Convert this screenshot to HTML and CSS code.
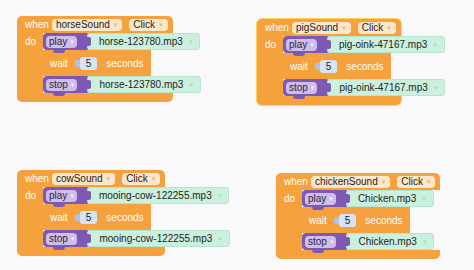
FILE: index.html
```html
<!DOCTYPE html>
<html lang="en">
<head>
    <meta charset="UTF-8">
    <meta name="viewport" content="width=device-width, initial-scale=1.0">
    <title>Animal Sounds - Blocks</title>
    <link rel="stylesheet" href="styles.css">
</head>
<body>
    <div class="workspace">

        <!-- horse -->
        <div class="event horse">
            <div class="head">
                <span class="label">when</span>
                <span class="field">horseSound<i class="arrow">▾</i></span>
                <span class="field second">Click<i class="arrow">▾</i></span>
            </div>
            <div class="mid">
                <div class="arm"><span class="label">do</span></div>
                <div class="stack">
                    <div class="stmt">
                        <div class="sound"><span class="pfield">play<i class="arrow">▾</i></span></div>
                        <div class="asset">horse-123780.mp3<i class="arrow">▾</i></div>
                    </div>
                    <div class="wait">
                        <span class="label">wait</span>
                        <span class="num">5</span>
                        <span class="label secs">seconds</span>
                    </div>
                    <div class="stmt">
                        <div class="sound"><span class="pfield">stop<i class="arrow">▾</i></span></div>
                        <div class="asset">horse-123780.mp3<i class="arrow">▾</i></div>
                    </div>
                </div>
            </div>
            <div class="foot"></div>
        </div>

        <!-- pig (selected) -->
        <div class="event pig selected">
            <div class="head">
                <span class="label">when</span>
                <span class="field">pigSound<i class="arrow">▾</i></span>
                <span class="field second">Click<i class="arrow">▾</i></span>
            </div>
            <div class="mid">
                <div class="arm"><span class="label">do</span></div>
                <div class="stack">
                    <div class="stmt">
                        <div class="sound"><span class="pfield">play<i class="arrow">▾</i></span></div>
                        <div class="asset">pig-oink-47167.mp3<i class="arrow">▾</i></div>
                    </div>
                    <div class="wait">
                        <span class="label">wait</span>
                        <span class="num">5</span>
                        <span class="label secs">seconds</span>
                    </div>
                    <div class="stmt">
                        <div class="sound"><span class="pfield">stop<i class="arrow">▾</i></span></div>
                        <div class="asset">pig-oink-47167.mp3<i class="arrow">▾</i></div>
                    </div>
                </div>
            </div>
            <div class="foot"></div>
        </div>

        <!-- cow -->
        <div class="event cow">
            <div class="head">
                <span class="label">when</span>
                <span class="field">cowSound<i class="arrow">▾</i></span>
                <span class="field second">Click<i class="arrow">▾</i></span>
            </div>
            <div class="mid">
                <div class="arm"><span class="label">do</span></div>
                <div class="stack">
                    <div class="stmt">
                        <div class="sound"><span class="pfield">play<i class="arrow">▾</i></span></div>
                        <div class="asset">mooing-cow-122255.mp3<i class="arrow">▾</i></div>
                    </div>
                    <div class="wait">
                        <span class="label">wait</span>
                        <span class="num">5</span>
                        <span class="label secs">seconds</span>
                    </div>
                    <div class="stmt">
                        <div class="sound"><span class="pfield">stop<i class="arrow">▾</i></span></div>
                        <div class="asset">mooing-cow-122255.mp3<i class="arrow">▾</i></div>
                    </div>
                </div>
            </div>
            <div class="foot"></div>
        </div>

        <!-- chicken -->
        <div class="event chicken">
            <div class="head">
                <span class="label">when</span>
                <span class="field">chickenSound<i class="arrow">▾</i></span>
                <span class="field second">Click<i class="arrow">▾</i></span>
            </div>
            <div class="mid">
                <div class="arm"><span class="label">do</span></div>
                <div class="stack">
                    <div class="stmt">
                        <div class="sound"><span class="pfield">play<i class="arrow">▾</i></span></div>
                        <div class="asset">Chicken.mp3<i class="arrow">▾</i></div>
                    </div>
                    <div class="wait">
                        <span class="label">wait</span>
                        <span class="num">5</span>
                        <span class="label secs">seconds</span>
                    </div>
                    <div class="stmt">
                        <div class="sound"><span class="pfield">stop<i class="arrow">▾</i></span></div>
                        <div class="asset">Chicken.mp3<i class="arrow">▾</i></div>
                    </div>
                </div>
            </div>
            <div class="foot"></div>
        </div>

    </div>
</body>
</html>
```

FILE: styles.css
```css
body {
    margin: 0;
    background-color: #f9f9fb;
    font-family: "Liberation Sans", Arial, sans-serif;
    font-size: 10px;
}
.workspace {
    position: relative;
    width: 474px;
    height: 270px;
    overflow: hidden;
}

/* event block: placed on the workspace canvas */
.event {
    position: absolute;
    display: flex;
    flex-direction: column;
}
.horse { left: 17px; top: 16px; }
.pig { left: 257px; top: 19px; }
.cow { left: 17px; top: 170px; }
.chicken { left: 276px; top: 173px; }

.head, .arm, .foot, .wait {
    background-color: #f5a13d;
}
.head {
    display: flex;
    align-items: center;
    height: 17px;
    padding: 0 5px 0 8px;
    border-radius: 5px 5px 0 0;
}
.label {
    color: #fff;
    white-space: nowrap;
}
.field {
    display: flex;
    align-items: center;
    height: 12px;
    padding: 0 5px 0 4px;
    margin-left: 3px;
    border-radius: 4px;
    background-color: #fde7cb;
    color: #222;
    white-space: nowrap;
}
.field.second {
    margin-left: 7px;
}
.arrow {
    font-style: normal;
    font-family: "DejaVu Sans", sans-serif;
    font-size: 7px;
    margin-left: 4px;
    color: #eab27a;
}

.mid {
    display: flex;
}
.arm {
    position: relative;
    width: 26px;
    flex: none;
    padding-left: 8px;
    box-sizing: border-box;
    line-height: 17px;
}
.stack {
    width: 0;
    display: flex;
    flex-direction: column;
}
.foot {
    height: 9px;
    border-radius: 0 0 5px 5px;
}

/* play / stop statement */
.stmt {
    display: flex;
    align-items: center;
    height: 17px;
    width: max-content;
}
.sound {
    position: relative;
    display: flex;
    align-items: center;
    height: 17px;
    padding: 0 13px 0 3px;
    border-radius: 4px;
    background-color: #7d59b6;
}
.sound::after {
    content: "";
    position: absolute;
    left: 10px;
    bottom: -3px;
    width: 12px;
    height: 4px;
    border-radius: 0 0 3px 3px;
    background-color: #7d59b6;
    z-index: 1;
}
.pfield {
    display: flex;
    align-items: center;
    height: 12px;
    padding: 0 3px 0 3px;
    border-radius: 4px;
    background-color: #cfbdea;
    color: #2a1f3d;
}
.pfield .arrow {
    margin-left: 3px;
    color: #f4effa;
}
.asset {
    position: relative;
    display: flex;
    align-items: center;
    height: 15px;
    padding: 0 7px 0 11px;
    margin-left: -3px;
    border: 1px solid #b6e4cd;
    border-radius: 3px;
    background-color: #cbf0de;
    color: #222;
    white-space: nowrap;
}
.asset::before {
    content: "";
    position: absolute;
    left: -1px;
    top: 3px;
    width: 4px;
    height: 9px;
    border-radius: 0 2px 2px 0;
    background-color: #7d59b6;
}
.asset .arrow {
    margin-left: 6px;
    color: #a9dcc2;
}

/* wait statement */
.wait {
    display: flex;
    align-items: center;
    height: 26px;
    width: max-content;
    padding: 0 7px;
    box-sizing: border-box;
}
.num {
    position: relative;
    height: 13px;
    line-height: 13px;
    padding: 0 6px;
    margin-left: 12px;
    border-radius: 3px;
    background-color: #d6e4f8;
    color: #222;
}
.num::before {
    content: "";
    position: absolute;
    left: -5px;
    top: 3px;
    width: 5px;
    height: 7px;
    border-radius: 2px 0 0 2px;
    background-color: #a9c3ea;
}
.secs {
    margin-left: 9px;
}

/* selected block outline */
.selected .head,
.selected .foot {
    box-shadow: 0 0 0 1px #fcd35a;
}
.selected .arm {
    box-shadow: -1px 0 0 #fcd35a;
}
```
